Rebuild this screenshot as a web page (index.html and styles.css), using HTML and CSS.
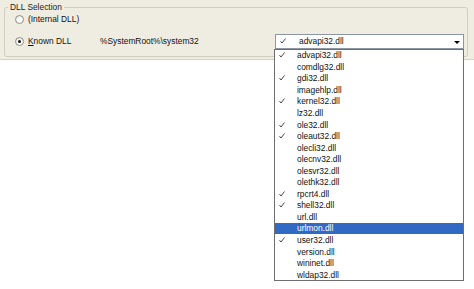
FILE: index.html
```html
<!DOCTYPE html>
<html lang="en">
<head>
    <meta charset="UTF-8">
    <title>DLL Selection</title>
    <link rel="stylesheet" href="styles.css">
</head>
<body>
    <div class="dialog">
        <div class="group">
            <span class="group-title">DLL Selection</span>
            <div class="row">
                <span class="radio"></span>
                <span class="label">(Internal DLL)</span>
            </div>
            <div class="row row-known">
                <span class="radio radio-on"></span>
                <span class="label label-known"><u>K</u>nown DLL</span>
                <span class="path">%SystemRoot%\system32</span>
                <div class="combo">
                    <div class="combo-box">
                        <span class="check"><svg width="6" height="6" viewBox="0 0 6 6"><path d="M0.5 3.2 L2 5 L5.5 0.5" fill="none" stroke="#333" stroke-width="0.9"/></svg></span>
                        <span>advapi32.dll</span>
                        <span class="arrow"></span>
                    </div>
                    <ul class="droplist" id="droplist"></ul>
                </div>
            </div>
        </div>
    </div>

    <script>
        // список библиотек: [имя, отмечена]
        const dlls = [
            ['advapi32.dll', true], ['comdlg32.dll', false], ['gdi32.dll', true],
            ['imagehlp.dll', false], ['kernel32.dll', true], ['lz32.dll', false],
            ['ole32.dll', true], ['oleaut32.dll', true], ['olecli32.dll', false],
            ['olecnv32.dll', false], ['olesvr32.dll', false], ['olethk32.dll', false],
            ['rpcrt4.dll', true], ['shell32.dll', true], ['url.dll', false],
            ['urlmon.dll', false], ['user32.dll', true], ['version.dll', false],
            ['wininet.dll', false], ['wldap32.dll', false]
        ];
        const tick = '<svg width="6" height="6" viewBox="0 0 6 6"><path d="M0.5 3.2 L2 5 L5.5 0.5" fill="none" stroke="#333" stroke-width="0.9"/></svg>';
        const list = document.getElementById('droplist');
        dlls.forEach(([name, checked]) => {
            const li = document.createElement('li');
            if (name === 'urlmon.dll') li.className = 'selected';
            li.innerHTML = '<span class="check">' + (checked ? tick : '') + '</span><span>' + name + '</span>';
            list.appendChild(li);
        });
    </script>
</body>
</html>
```

FILE: styles.css
```css
html {
    height: 100%;
}
body {
    margin: 0;
    min-height: 100%;
    background-color: #ffffff;
    font-family: "Liberation Sans", Arial, sans-serif;
    font-size: 8.4px;
    color: #111;
}
.dialog {
    height: 60px;
    padding-top: 7px;
    box-sizing: border-box;
    background-color: #efede2;
    border-bottom: 1px solid #d6d3c6;
}
.group {
    height: 50px;
    box-sizing: border-box;
    margin: 0 6px 0 4px;
    padding-left: 3px;
    border: 1px solid #d0cfbf;
    border-radius: 3px;
}
.group-title {
    display: block;
    width: fit-content;
    margin-top: -7px;
    padding: 0 2px;
    line-height: 12px;
    background-color: #efede2;
    color: #222;
}
.row {
    display: flex;
    align-items: center;
    height: 12px;
    padding-left: 7px;
}
.row-known {
    height: 16px;
    margin-top: 8px;
}
.radio {
    width: 9px;
    height: 9px;
    box-sizing: border-box;
    border: 1px solid #8f8f86;
    border-radius: 50%;
    background: radial-gradient(circle at 60% 65%, #ffffff 30%, #d9d8d0 100%);
    margin-right: 4px;
    display: flex;
    align-items: center;
    justify-content: center;
}
.radio-on::after {
    content: "";
    width: 3px;
    height: 3px;
    border-radius: 50%;
    background-color: #111;
}
.label-known {
    width: 72px;
}
.path {
    width: 175px;
}
.combo {
    position: relative;
    width: 189px;
}
.combo-box {
    display: flex;
    align-items: center;
    height: 15px;
    box-sizing: border-box;
    border: 1px solid #8c97a3;
    background-color: #ffffff;
}
.combo-box .check {
    width: 23px;
}
.check {
    display: flex;
    align-items: center;
    flex-shrink: 0;
    width: 22px;
}
.check svg {
    margin-left: 4px;
}
.arrow {
    margin-left: auto;
    margin-right: 3px;
    width: 0;
    height: 0;
    border-left: 3px solid transparent;
    border-right: 3px solid transparent;
    border-top: 3px solid #000;
    margin-top: 2px;
}
.droplist {
    position: absolute;
    left: -1px;
    top: 15px;
    width: 190px;
    margin: 0;
    padding: 0;
    list-style: none;
    background-color: #ffffff;
    border: 1px solid #6e6e6e;
    box-sizing: border-box;
}
.droplist li {
    display: flex;
    align-items: center;
    height: 11.55px;
}
.droplist li.selected {
    background-color: #316ac5;
    color: #ffffff;
}
```
